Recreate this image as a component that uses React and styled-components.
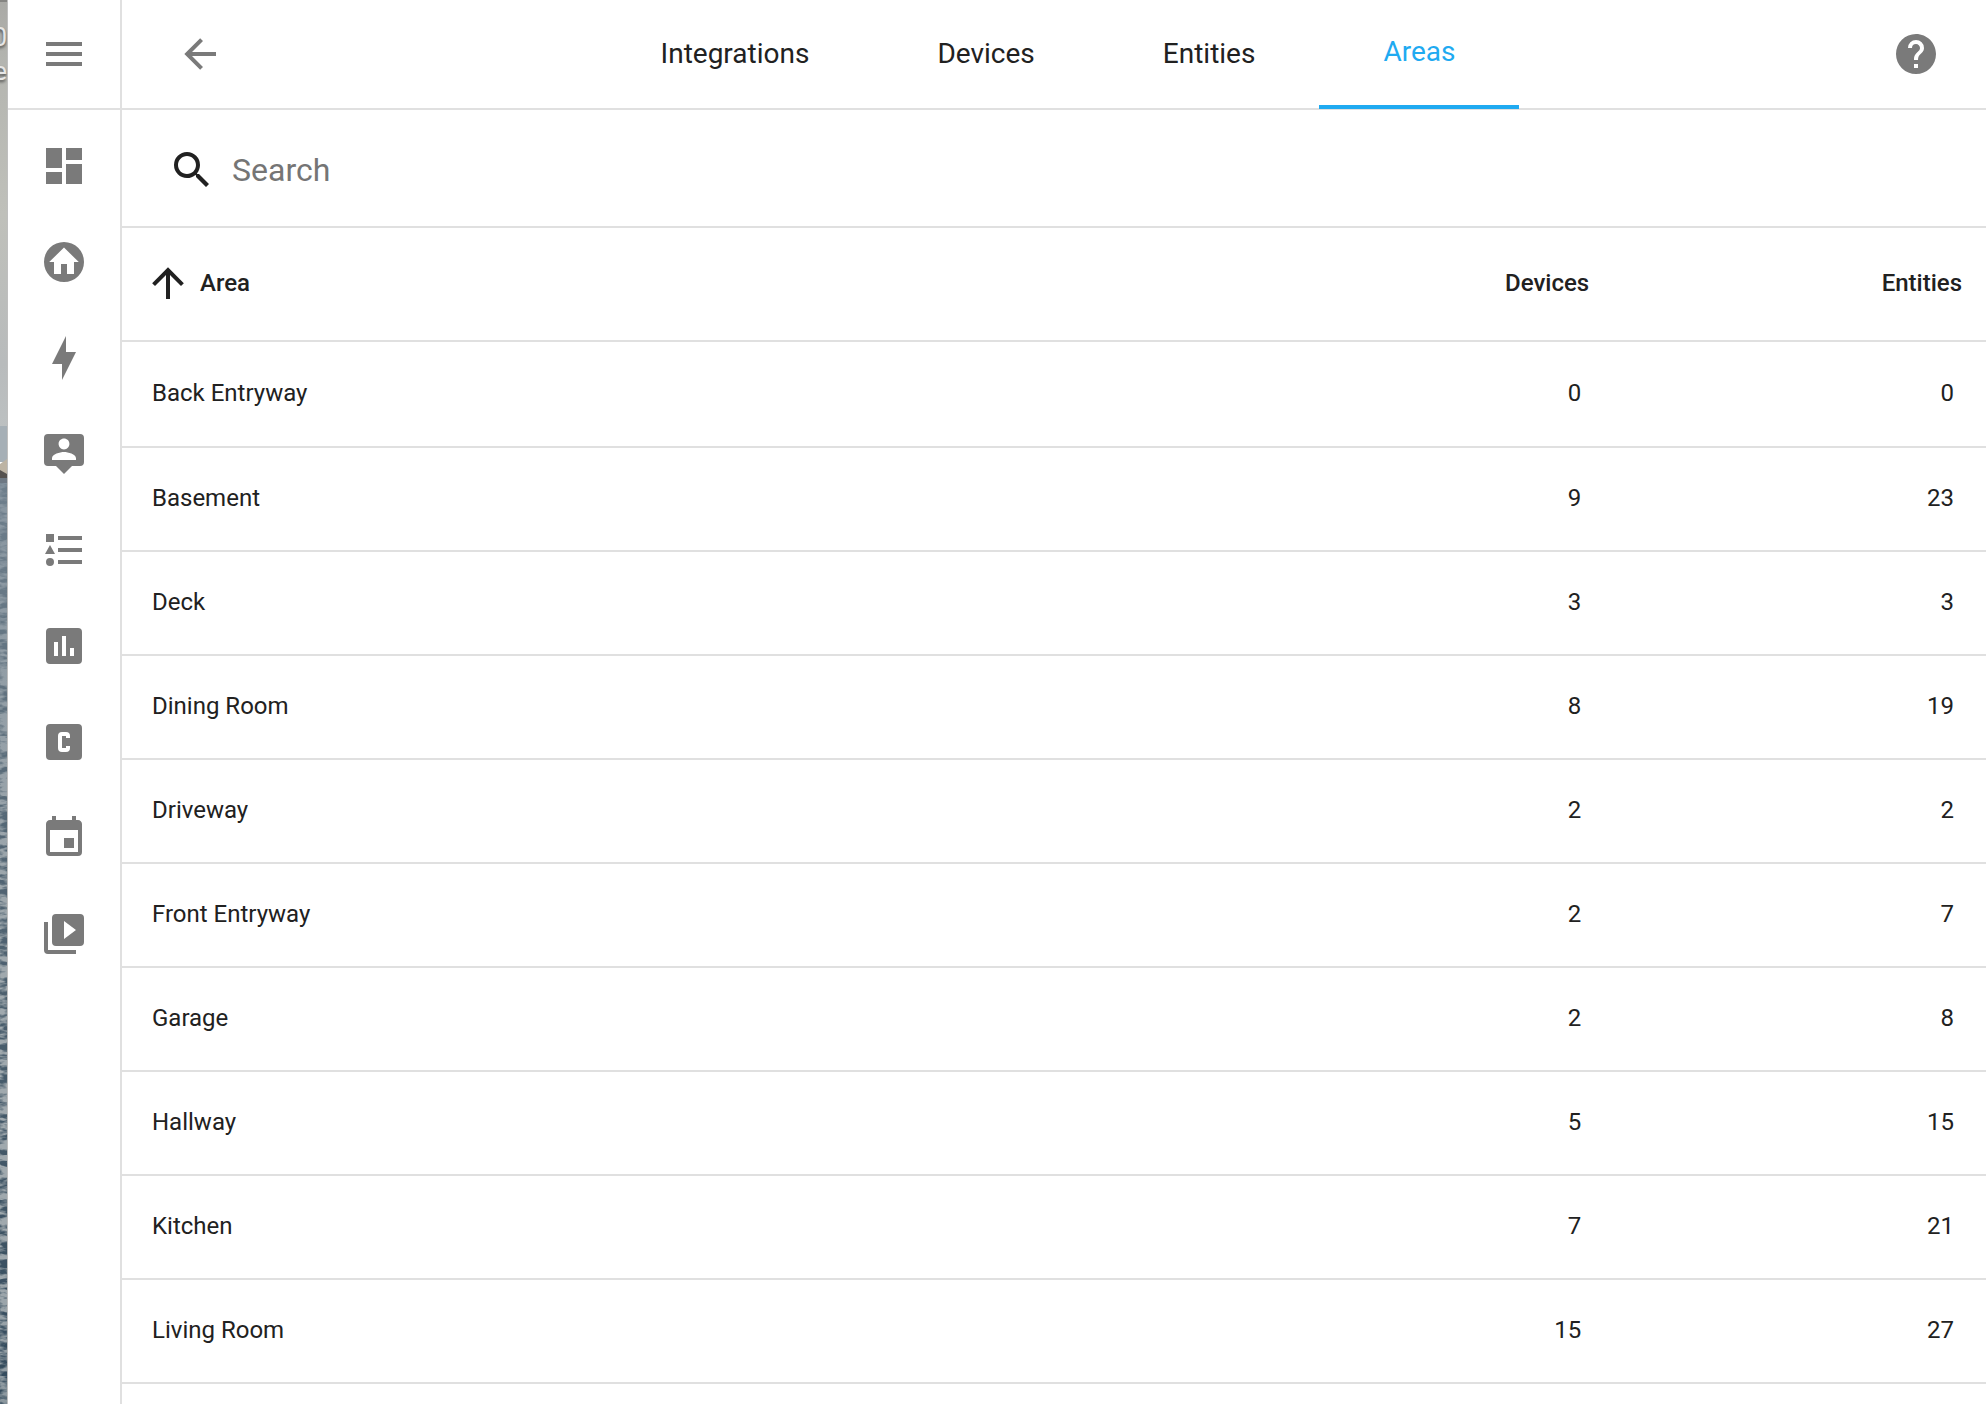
import React, { useState } from 'react';
import styled, { createGlobalStyle, ThemeProvider } from 'styled-components';

const theme = {
    background: '#ffffff',
    text: '#212121',
    icon: '#7a7a7a',
    placeholder: '#757575',
    divider: '#e0e0e0',
    primary: '#1faaf1'
};

const GlobalStyle = createGlobalStyle`
    *, *::before, *::after {
        box-sizing: border-box;
    }
    body {
        margin: 0;
        background: ${theme.background};
        color: ${theme.text};
        font-family: Roboto, sans-serif;
        font-size: 24px;
        -webkit-font-smoothing: antialiased;
    }
`;

const icons = {
    menu: 'M3,6H21V8H3V6M3,11H21V13H3V11M3,16H21V18H3V16Z',
    back: 'M20,11V13H8L13.5,18.5L12.08,19.92L4.16,12L12.08,4.08L13.5,5.5L8,11H20Z',
    up: 'M13,20H11V8L5.5,13.5L4.08,12.08L12,4.16L19.92,12.08L18.5,13.5L13,8V20Z',
    help: 'M15.07,11.25L14.17,12.17C13.45,12.89 13,13.5 13,15H11V14.5C11,13.39 11.45,12.39 12.17,11.67L13.41,10.41C13.78,10.05 14,9.55 14,9C14,7.89 13.1,7 12,7A2,2 0 0,0 10,9H8A4,4 0 0,1 12,5A4,4 0 0,1 16,9C16,9.88 15.64,10.67 15.07,11.25M13,19H11V17H13M12,2A10,10 0 0,0 2,12A10,10 0 0,0 12,22A10,10 0 0,0 22,12C22,6.47 17.5,2 12,2Z',
    magnify: 'M9.5,3A6.5,6.5 0 0,1 16,9.5C16,11.11 15.41,12.59 14.44,13.73L14.71,14H15.5L20.5,19L19,20.5L14,15.5V14.71L13.73,14.44C12.59,15.41 11.11,16 9.5,16A6.5,6.5 0 0,1 3,9.5A6.5,6.5 0 0,1 9.5,3M9.5,5C7,5 5,7 5,9.5C5,12 7,14 9.5,14C12,14 14,12 14,9.5C14,7 12,5 9.5,5Z',
    dashboard: 'M13,3V9H21V3M13,21H21V11H13M3,21H11V15H3M3,13H11V3H3V13Z',
    home: 'M12,2A10,10 0 0,0 2,12A10,10 0 0,0 12,22A10,10 0 0,0 22,12A10,10 0 0,0 12,2M12,4.8L19.4,12H17V18H13.5V13H10.5V18H7V12H4.6L12,4.8Z',
    flash: 'M11,15H6L13,1V9H18L11,23V15Z',
    account: 'M20,2H4A2,2 0 0,0 2,4V16A2,2 0 0,0 4,18H8L12,22L16,18H20A2,2 0 0,0 22,16V4A2,2 0 0,0 20,2M12,4.3C13.5,4.3 14.7,5.5 14.7,7C14.7,8.5 13.5,9.7 12,9.7C10.5,9.7 9.3,8.5 9.3,7C9.3,5.5 10.5,4.3 12,4.3M18,15H6V14.1C6,12.1 10,11 12,11C14,11 18,12.1 18,14.1V15Z',
    list: 'M5,9.5L7.5,14H2.5L5,9.5M3,4H7V8H3V4M5,20A2,2 0 0,0 7,18A2,2 0 0,0 5,16A2,2 0 0,0 3,18A2,2 0 0,0 5,20M9,5V7H21V5H9M9,19H21V17H9V19M9,13H21V11H9V13Z',
    chart: 'M5,3A2,2 0 0,0 3,5V19A2,2 0 0,0 5,21H19A2,2 0 0,0 21,19V5A2,2 0 0,0 19,3H5M7,10H9V17H7V10M11,7H13V17H11V7M15,13H17V17H15V13Z',
    box: 'M3,5A2,2 0 0,1 5,3H19A2,2 0 0,1 21,5V19A2,2 0 0,1 19,21H5A2,2 0 0,1 3,19V5M11,7A2,2 0 0,0 9,9V15A2,2 0 0,0 11,17H13A2,2 0 0,0 15,15V14H13V15H11V9H13V10H15V9A2,2 0 0,0 13,7H11Z',
    calendar: 'M19,19H5V8H19M16,1V3H8V1H6V3H5C3.89,3 3,3.89 3,5V19A2,2 0 0,0 5,21H19A2,2 0 0,0 21,19V5C21,3.89 20.1,3 19,3H18V1M17,12H12V17H17V12Z',
    media: 'M4,6H2V20A2,2 0 0,0 4,22H18V20H4V6M20,2H8A2,2 0 0,0 6,4V16A2,2 0 0,0 8,18H20A2,2 0 0,0 22,16V4A2,2 0 0,0 20,2M12,14.5V5.5L18,10L12,14.5Z'
};

const sidebarItems = [
    { icon: 'dashboard', label: 'Overview' },
    { icon: 'home', label: 'Home' },
    { icon: 'flash', label: 'Energy' },
    { icon: 'account', label: 'Map' },
    { icon: 'list', label: 'Logbook' },
    { icon: 'chart', label: 'History' },
    { icon: 'box', label: 'Community store' },
    { icon: 'calendar', label: 'Calendar' },
    { icon: 'media', label: 'Media' }
];

const tabs = ['Integrations', 'Devices', 'Entities', 'Areas'];

const areas = [
    { name: 'Back Entryway', devices: 0, entities: 0 },
    { name: 'Basement', devices: 9, entities: 23 },
    { name: 'Deck', devices: 3, entities: 3 },
    { name: 'Dining Room', devices: 8, entities: 19 },
    { name: 'Driveway', devices: 2, entities: 2 },
    { name: 'Front Entryway', devices: 2, entities: 7 },
    { name: 'Garage', devices: 2, entities: 8 },
    { name: 'Hallway', devices: 5, entities: 15 },
    { name: 'Kitchen', devices: 7, entities: 21 },
    { name: 'Living Room', devices: 15, entities: 27 }
];

const Page = styled.div`
    display: flex;
    min-height: 100vh;
`;

const Desktop = styled.div`
    position: relative;
    flex: none;
    width: 8px;
    overflow: hidden;
    border-right: 1px solid rgba(0, 0, 0, 0.25);
`;

const Wallpaper = styled.svg`
    position: absolute;
    inset: 0;
    width: 100%;
    height: 100%;
`;

const DesktopLabel = styled.div`
    position: relative;
    display: flex;
    flex-direction: column;
    align-items: flex-end;
    padding-top: 20px;
    color: #e6e6e6;
    font-size: 26px;
    line-height: 34px;
    text-shadow: 0 2px 3px rgba(0, 0, 0, 0.6);
`;

const Sidebar = styled.nav`
    flex: none;
    width: 114px;
    border-right: 2px solid ${props => props.theme.divider};
`;

const SidebarHeader = styled.div`
    display: flex;
    align-items: center;
    justify-content: center;
    height: 110px;
    border-bottom: 2px solid ${props => props.theme.divider};
`;

const SidebarList = styled.div`
    display: flex;
    flex-direction: column;
    padding-top: 8px;
`;

const SidebarLink = styled.a`
    display: flex;
    align-items: center;
    justify-content: center;
    height: 96px;
    color: ${props => props.theme.icon};
`;

const IconButton = styled.button`
    display: flex;
    align-items: center;
    justify-content: center;
    flex: none;
    width: 96px;
    height: 96px;
    padding: 0;
    border: 0;
    background: none;
    color: ${props => props.theme.icon};
    cursor: pointer;
`;

const Svg = styled.svg`
    display: block;
    flex: none;
    width: 48px;
    height: 48px;
    fill: currentColor;
`;

const Main = styled.main`
    flex: 1;
    min-width: 0;
`;

const Toolbar = styled.header`
    display: flex;
    align-items: center;
    height: 110px;
    padding: 0 22px 0 30px;
    border-bottom: 2px solid ${props => props.theme.divider};
`;

const Tabs = styled.div`
    display: flex;
    flex: 1;
    align-self: stretch;
    justify-content: center;
`;

const Tab = styled.a`
    display: flex;
    align-items: center;
    padding: 0 64px 2px;
    color: ${props => (props.$active ? props.theme.primary : props.theme.text)};
    border-bottom: ${props => (props.$active ? `4px solid ${props.theme.primary}` : 0)};
    margin-bottom: ${props => (props.$active ? '-1px' : 0)};
    font-size: 28px;
    text-decoration: none;
`;

const SearchBar = styled.label`
    display: flex;
    align-items: center;
    gap: 16px;
    height: 118px;
    padding: 4px 46px 0;
    border-bottom: 2px solid ${props => props.theme.divider};
`;

const SearchInput = styled.input`
    flex: 1;
    min-width: 0;
    padding: 0;
    border: 0;
    outline: 0;
    background: none;
    color: ${props => props.theme.text};
    font: 32px Roboto, sans-serif;
    &::placeholder {
        color: ${props => props.theme.placeholder};
        opacity: 1;
    }
`;

const Table = styled.table`
    width: 100%;
    table-layout: fixed;
    border-spacing: 0;
`;

const HeaderCell = styled.th`
    width: ${props => (props.$numeric ? '20%' : 'auto')};
    height: 114px;
    padding: 0 ${props => (props.$numeric ? '24px' : '30px')} 2px;
    border-bottom: 2px solid ${props => props.theme.divider};
    font-weight: 500;
    text-align: ${props => (props.$numeric ? 'right' : 'left')};
`;

const SortButton = styled.button`
    display: flex;
    align-items: center;
    gap: 8px;
    margin-left: -8px;
    padding: 0;
    border: 0;
    background: none;
    color: inherit;
    font: inherit;
    cursor: pointer;
`;

const Row = styled.tr`
    height: 104px;
    &:first-child {
        height: 106px;
    }
`;

const Cell = styled.td`
    padding: 0 ${props => (props.$numeric ? '32px' : '30px')} 2px;
    border-bottom: 2px solid ${props => props.theme.divider};
    text-align: ${props => (props.$numeric ? 'right' : 'left')};
`;

const Icon = ({ name }) => (
    <Svg viewBox="0 0 24 24" aria-hidden="true">
        <path fillRule="evenodd" d={icons[name]} />
    </Svg>
);

const DesktopStrip = () => (
    <Desktop aria-hidden="true">
        <Wallpaper viewBox="0 0 8 1404" preserveAspectRatio="none">
            <defs>
                <linearGradient id="sky" x1="0" y1="0" x2="0" y2="1">
                    <stop offset="0" stopColor="#a9a9a5" />
                    <stop offset="0.15" stopColor="#b4b5b0" />
                    <stop offset="0.5" stopColor="#bfc0ba" />
                    <stop offset="0.85" stopColor="#b8bbbc" />
                    <stop offset="1" stopColor="#bcc0c1" />
                </linearGradient>
                <linearGradient id="water" x1="0" y1="0" x2="0" y2="1">
                    <stop offset="0" stopColor="#8795a0" />
                    <stop offset="0.5" stopColor="#a0a9ae" />
                    <stop offset="0.85" stopColor="#a0a9ae" />
                    <stop offset="1" stopColor="#8c989f" />
                </linearGradient>
                <linearGradient id="depth" x1="0" y1="0" x2="0" y2="1">
                    <stop offset="0" stopColor="#fff" stopOpacity="0.3" />
                    <stop offset="0.4" stopColor="#fff" stopOpacity="0.7" />
                    <stop offset="1" stopColor="#fff" />
                </linearGradient>
                <mask id="fade">
                    <rect y="483" width="8" height="921" fill="url(#depth)" />
                </mask>
                <filter id="waves" x="0" y="0" width="100%" height="100%" colorInterpolationFilters="sRGB">
                    <feTurbulence type="fractalNoise" baseFrequency="0.06 0.2" numOctaves="3" seed="4" />
                    <feColorMatrix values="0 0 0 0 0.2  0 0 0 0 0.29  0 0 0 0 0.36  4 0 0 0 -1.6" />
                </filter>
            </defs>
            <rect width="8" height="428" fill="url(#sky)" />
            <rect width="8" height="2" fill="#858582" />
            <rect y="426" width="8" height="36" fill="#a5afb6" />
            <path d="M0,464L8,459V474H0Z" fill="#bdb4a4" />
            <path d="M0,470L8,474V479H0Z" fill="#55524f" />
            <rect y="478" width="8" height="5" fill="#6d7883" />
            <rect y="483" width="8" height="921" fill="url(#water)" />
            <g mask="url(#fade)">
                <rect y="483" width="8" height="921" filter="url(#waves)" />
            </g>
        </Wallpaper>
        <DesktopLabel>
            <span>0</span>
            <span>e</span>
        </DesktopLabel>
    </Desktop>
);

export default function App () {
    const [query, setQuery] = useState('');
    const [ascending, setAscending] = useState(true);

    const rows = areas.filter(area => area.name.toLowerCase().includes(query.toLowerCase()));
    if (!ascending) {
        rows.reverse();
    }

    return (
        <ThemeProvider theme={theme}>
            <GlobalStyle />
            <Page>
                <DesktopStrip />
                <Sidebar>
                    <SidebarHeader>
                        <IconButton aria-label="Menu">
                            <Icon name="menu" />
                        </IconButton>
                    </SidebarHeader>
                    <SidebarList>
                        {sidebarItems.map(item => (
                            <SidebarLink key={item.icon} href="#" aria-label={item.label}>
                                <Icon name={item.icon} />
                            </SidebarLink>
                        ))}
                    </SidebarList>
                </Sidebar>
                <Main>
                    <Toolbar>
                        <IconButton aria-label="Back">
                            <Icon name="back" />
                        </IconButton>
                        <Tabs>
                            {tabs.map(tab => (
                                <Tab key={tab} href="#" $active={tab === 'Areas'}>{tab}</Tab>
                            ))}
                        </Tabs>
                        <IconButton aria-label="Help">
                            <Icon name="help" />
                        </IconButton>
                    </Toolbar>
                    <SearchBar>
                        <Icon name="magnify" />
                        <SearchInput
                            type="text"
                            placeholder="Search"
                            aria-label="Search"
                            value={query}
                            onChange={event => setQuery(event.target.value)}
                        />
                    </SearchBar>
                    <Table>
                        <thead>
                            <tr>
                                <HeaderCell aria-sort={ascending ? 'ascending' : 'descending'}>
                                    <SortButton onClick={() => setAscending(!ascending)}>
                                        <Icon name="up" />
                                        Area
                                    </SortButton>
                                </HeaderCell>
                                <HeaderCell $numeric>Devices</HeaderCell>
                                <HeaderCell $numeric>Entities</HeaderCell>
                            </tr>
                        </thead>
                        <tbody>
                            {rows.map(area => (
                                <Row key={area.name}>
                                    <Cell>{area.name}</Cell>
                                    <Cell $numeric>{area.devices}</Cell>
                                    <Cell $numeric>{area.entities}</Cell>
                                </Row>
                            ))}
                        </tbody>
                    </Table>
                </Main>
            </Page>
        </ThemeProvider>
    );
}
